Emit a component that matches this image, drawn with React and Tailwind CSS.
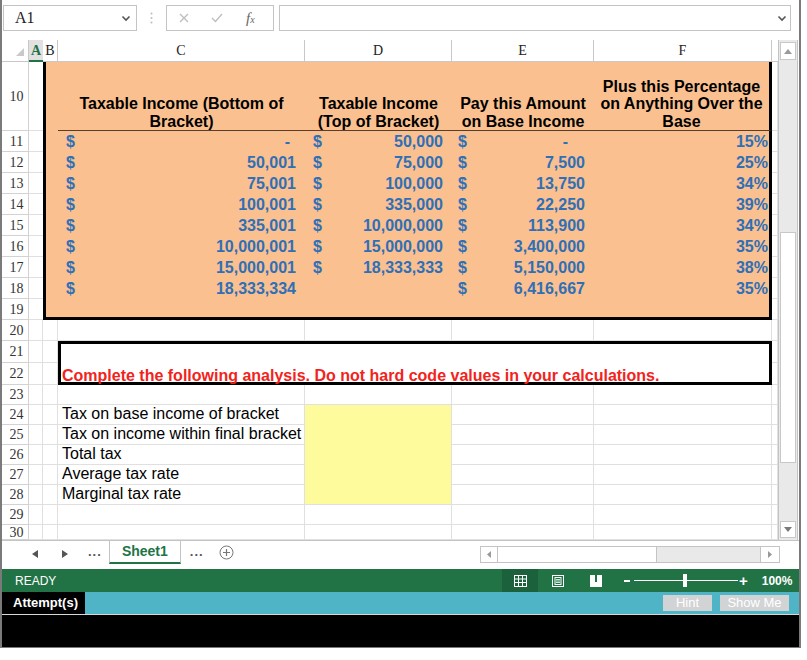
import React from 'react';

const ORANGE = 'bg-[#fac090]';
const BLUE = 'text-[#2f6fb6]';

const Chevron = ({ className = '' }) => (
  <svg width="10" height="7" viewBox="0 0 10 7" className={className}>
    <polyline points="1.5,1.5 5,5 8.5,1.5" fill="none" stroke="#555" strokeWidth="1.6" />
  </svg>
);

const Head = ({ n }) => (
  <div className="w-[27px] shrink-0 flex items-center justify-center border-r border-b border-[#d2d2d2] pl-[3px] font-['Liberation_Serif',serif] text-[14px] text-[#333]">
    {n}
  </div>
);

function Plain({ n, h, label, yellow, lastYellow }) {
  return (
    <div className={`flex ${h}`}>
      <Head n={n} />
      <div className="w-[14px] shrink-0 border-r border-b border-[#e0e0e0]" />
      <div className="w-[15px] shrink-0 border-r border-b border-[#e0e0e0]" />
      <div className="w-[247px] shrink-0 flex items-center pl-1 pb-[2px] border-r border-b border-[#e0e0e0] text-[16px] text-black whitespace-nowrap">
        {label}
      </div>
      <div
        className={`w-[147px] shrink-0 border-r border-[#e0e0e0] ${yellow ? 'bg-[#fefb9d]' : ''} ${
          yellow && !lastYellow ? '' : 'border-b'
        }`}
      />
      <div className="w-[142px] shrink-0 border-r border-b border-[#e0e0e0]" />
      <div className="w-[178px] shrink-0 border-r border-b border-[#e0e0e0]" />
      <div className="w-[6px] shrink-0 border-r border-b border-[#e0e0e0]" />
    </div>
  );
}

function Orange({ n, h, header, last, c, d, e, f }) {
  const bb = last
    ? 'border-b-[3px] border-b-black'
    : header
    ? 'border-b border-b-[#5a3e2b]'
    : '';
  return (
    <div className={`flex ${h}`}>
      <Head n={n} />
      <div className="w-[14px] shrink-0 border-b border-[#e0e0e0]" />
      <div className={`w-[15px] shrink-0 ${ORANGE} border-l-[3px] border-l-black ${last ? 'border-b-[3px] border-b-black' : ''}`} />
      <div className={`w-[247px] shrink-0 ${ORANGE} ${bb}`}>{c}</div>
      <div className={`w-[147px] shrink-0 ${ORANGE} ${bb}`}>{d}</div>
      <div className={`w-[142px] shrink-0 ${ORANGE} ${bb}`}>{e}</div>
      <div className={`w-[178px] shrink-0 ${ORANGE} border-r-[3px] border-r-black ${bb}`}>{f}</div>
      <div className="w-[6px] shrink-0 border-r border-b border-[#e0e0e0]" />
    </div>
  );
}

function BoxRow({ n, h, top, children }) {
  const edge = top ? 'border-t-[3px]' : 'border-b-[3px]';
  return (
    <div className={`flex ${h}`}>
      <Head n={n} />
      <div className="w-[14px] shrink-0 border-r border-b border-[#e0e0e0]" />
      <div className="w-[15px] shrink-0 border-r border-b border-[#e0e0e0]" />
      <div className={`w-[247px] shrink-0 border-l-[3px] border-black ${edge} flex items-end pl-[1px]`}>{children}</div>
      <div className={`w-[147px] shrink-0 border-black ${edge}`} />
      <div className={`w-[142px] shrink-0 border-black ${edge}`} />
      <div className={`w-[178px] shrink-0 border-r-[3px] border-black ${edge}`} />
      <div className="w-[6px] shrink-0 border-r border-b border-[#e0e0e0]" />
    </div>
  );
}

const HeaderText = ({ children }) => (
  <div className="h-full flex items-end justify-center text-center font-bold text-[16px] leading-[17.5px] text-black">
    <div>{children}</div>
  </div>
);

const data = [
  ['-', '50,000', '-', '15%'],
  ['50,001', '75,000', '7,500', '25%'],
  ['75,001', '100,000', '13,750', '34%'],
  ['100,001', '335,000', '22,250', '39%'],
  ['335,001', '10,000,000', '113,900', '34%'],
  ['10,000,001', '15,000,000', '3,400,000', '35%'],
  ['15,000,001', '18,333,333', '5,150,000', '38%'],
  ['18,333,334', null, '6,416,667', '35%'],
];

function Money({ v, pl, dashPr }) {
  if (v === null) return null;
  return (
    <div className={`h-full flex items-center justify-between ${pl} pr-[9px] font-bold text-[16px] ${BLUE}`}>
      <span>$</span>
      <span className={v === '-' ? dashPr : ''}>{v}</span>
    </div>
  );
}

export default function App() {
  return (
    <div className="w-[807px] h-[660px] bg-white font-['Liberation_Sans',Arial,sans-serif] overflow-hidden">
      <div className="w-[801px] border-l-2 border-r-2 border-b border-[#7a7a7a] flex flex-col">
        {/* formula bar */}
        <div className="h-[40px] flex items-start pt-[5px]">
          <div className="ml-px w-[134px] h-[26px] border border-[#c4c4c4] flex items-center pl-[11px] pr-[5px]">
            <span className="font-['Liberation_Serif',serif] text-[16px] text-[#222]">A1</span>
            <Chevron className="ml-auto" />
          </div>
          <div className="w-[29px] h-[26px] flex items-center justify-center">
            <svg width="3" height="12" viewBox="0 0 3 12">
              <circle cx="1.5" cy="1.5" r="1" fill="#bbb" />
              <circle cx="1.5" cy="6" r="1" fill="#bbb" />
              <circle cx="1.5" cy="10.5" r="1" fill="#bbb" />
            </svg>
          </div>
          <div className="w-[108px] h-[26px] border border-[#c4c4c4] flex items-center">
            <svg width="10" height="10" viewBox="0 0 10 10" className="ml-[12px]">
              <path d="M1 1 L9 9 M9 1 L1 9" stroke="#bdbdbd" strokeWidth="1.3" />
            </svg>
            <svg width="12" height="10" viewBox="0 0 12 10" className="ml-[22px]">
              <polyline points="1,5 4.5,8.5 11,1" fill="none" stroke="#bdbdbd" strokeWidth="1.3" />
            </svg>
            <span className="ml-[23px] font-['Liberation_Serif',serif] italic text-[15px] text-[#666]">
              f<span className="text-[10px]">x</span>
            </span>
          </div>
          <div className="ml-[5px] w-[512px] h-[26px] border border-[#c4c4c4] flex items-center justify-end pr-[3px]">
            <Chevron />
          </div>
        </div>

        {/* grid + vertical scrollbar */}
        <div className="flex h-[500px]">
          <div className="w-[776px] shrink-0 flex flex-col">
            <div className="flex h-[22px] font-['Liberation_Serif',serif] text-[14px] text-[#222]">
              <div className="w-[27px] shrink-0 border-r border-b border-[#c8c8c8] flex items-end justify-end pr-[4px] pb-[5px]">
                <svg width="8" height="8" viewBox="0 0 8 8">
                  <polygon points="8,0 8,8 0,8" fill="#c9c9c9" />
                </svg>
              </div>
              <div className="w-[14px] shrink-0 bg-[#e1e1e1] border-b-2 border-[#217346] flex items-center justify-center font-bold text-[#217346]">
                A
              </div>
              <div className="w-[15px] shrink-0 border-r border-b border-[#c8c8c8] flex items-center justify-center">B</div>
              <div className="w-[247px] shrink-0 border-r border-b border-[#c8c8c8] flex items-center justify-center">C</div>
              <div className="w-[147px] shrink-0 border-r border-b border-[#c8c8c8] flex items-center justify-center">D</div>
              <div className="w-[142px] shrink-0 border-r border-b border-[#c8c8c8] flex items-center justify-center">E</div>
              <div className="w-[178px] shrink-0 border-r border-b border-[#c8c8c8] flex items-center justify-center">F</div>
              <div className="w-[6px] shrink-0 border-b border-[#c8c8c8]" />
            </div>

            <Orange
              n={10}
              h="h-[69px]"
              header
              c={<HeaderText>Taxable Income (Bottom of<br />Bracket)</HeaderText>}
              d={<HeaderText>Taxable Income<br />(Top of Bracket)</HeaderText>}
              e={<HeaderText>Pay this Amount<br />on Base Income</HeaderText>}
              f={<HeaderText>Plus this Percentage<br />on Anything Over the<br />Base</HeaderText>}
            />
            {data.map((r, i) => (
              <Orange
                key={i}
                n={11 + i}
                h="h-[21px]"
                c={<Money v={r[0]} pl="pl-2" dashPr="pr-[6px]" />}
                d={<Money v={r[1]} pl="pl-2" dashPr="pr-[6px]" />}
                e={<Money v={r[2]} pl="pl-[6px]" dashPr="pr-[17px]" />}
                f={
                  <div className={`h-full flex items-center justify-end pr-px font-bold text-[16px] ${BLUE}`}>
                    {r[3]}
                  </div>
                }
              />
            ))}
            <Orange n={19} h="h-[21px]" last />
            <Plain n={20} h="h-[21px]" />
            <BoxRow n={21} h="h-[22px]" top />
            <BoxRow n={22} h="h-[22px]">
              <span className="relative z-10 whitespace-nowrap font-bold text-[16px] leading-[12px] text-[#f2231c]">
                Complete the following analysis. Do not hard code values in your calculations.
              </span>
            </BoxRow>
            <Plain n={23} h="h-[20px]" />
            <Plain n={24} h="h-[20px]" label="Tax on base income of bracket" yellow />
            <Plain n={25} h="h-[20px]" label="Tax on income within final bracket" yellow />
            <Plain n={26} h="h-[20px]" label="Total tax" yellow />
            <Plain n={27} h="h-[20px]" label="Average tax rate" yellow />
            <Plain n={28} h="h-[20px]" label="Marginal tax rate" yellow lastYellow />
            <Plain n={29} h="h-[20px]" />
            <Plain n={30} h="h-[15px]" />
          </div>

          <div className="w-[20px] shrink-0 bg-[#e9e9e9] border-x border-[#c4c4c4] flex flex-col">
            <div className="mt-[2px] mx-px h-[18px] bg-white border border-[#c8c8c8] flex items-center justify-center">
              <svg width="8" height="5" viewBox="0 0 8 5">
                <polygon points="4,0 8,5 0,5" fill="#9a9a9a" />
              </svg>
            </div>
            <div className="mt-[172px] mx-px h-[231px] bg-white border border-[#c8c8c8]" />
            <div className="mt-auto mb-[2px] mx-px h-[17px] bg-white border border-[#c8c8c8] flex items-center justify-center">
              <svg width="8" height="5" viewBox="0 0 8 5">
                <polygon points="0,0 8,0 4,5" fill="#7a7a7a" />
              </svg>
            </div>
          </div>
        </div>

        {/* sheet tabs */}
        <div className="h-[29px] border-t border-[#c4c4c4] flex items-start">
          <svg width="6" height="8" viewBox="0 0 6 8" className="ml-[30px] mt-[9px]">
            <polygon points="6,0 6,8 0,4" fill="#555" />
          </svg>
          <svg width="6" height="8" viewBox="0 0 6 8" className="ml-[24px] mt-[9px]">
            <polygon points="0,0 0,8 6,4" fill="#555" />
          </svg>
          <span className="ml-[20px] mt-[4px] text-[13px] font-bold text-[#555] leading-none tracking-[1px]">...</span>
          <div className="ml-[7px] w-[72px] h-[23px] border-x border-[#c4c4c4] border-b-2 border-b-[#217346] flex items-center justify-center text-[14px] font-bold text-[#217346]">
            Sheet1
          </div>
          <span className="ml-[9px] mt-[4px] text-[13px] font-bold text-[#555] leading-none tracking-[1px]">...</span>
          <svg width="15" height="15" viewBox="0 0 15 15" className="ml-[15px] mt-[4px]">
            <circle cx="7.5" cy="7.5" r="6.5" fill="none" stroke="#777" strokeWidth="1" />
            <path d="M7.5 4 V11 M4 7.5 H11" stroke="#777" strokeWidth="1.2" />
          </svg>
          <div className="ml-auto mr-[19px] mt-[5px] w-[300px] h-[17px] border border-[#c4c4c4] bg-[#e9e9e9] flex">
            <div className="w-[17px] bg-white border-r border-[#c4c4c4] flex items-center justify-center">
              <svg width="4" height="7" viewBox="0 0 4 7">
                <polygon points="4,0 4,7 0,3.5" fill="#999" />
              </svg>
            </div>
            <div className="w-[159px] bg-white border-r border-[#c4c4c4]" />
            <div className="flex-1" />
            <div className="w-[19px] bg-white border-l border-[#c4c4c4] flex items-center justify-center">
              <svg width="4" height="7" viewBox="0 0 4 7">
                <polygon points="0,0 0,7 4,3.5" fill="#999" />
              </svg>
            </div>
          </div>
        </div>

        {/* status bar */}
        <div className="h-[23px] bg-[#217346] flex items-center text-white">
          <span className="ml-[13px] text-[12px]">READY</span>
          <div className="ml-auto w-[297px] h-full flex items-center">
            <div className="w-[36px] h-full bg-[#1b613b] flex items-center justify-center">
              <svg width="13" height="12" viewBox="0 0 13 12">
                <rect x="0.5" y="0.5" width="12" height="11" fill="none" stroke="#fff" />
                <path d="M4.5 0.5 V11.5 M8.5 0.5 V11.5 M0.5 4 H12.5 M0.5 7.5 H12.5" stroke="#fff" />
              </svg>
            </div>
            <svg width="12" height="12" viewBox="0 0 12 12" className="ml-[14px]">
              <rect x="0.5" y="0.5" width="11" height="11" fill="none" stroke="#fff" />
              <rect x="3" y="2.5" width="6" height="7" fill="none" stroke="#fff" />
              <path d="M4 4.5 H8 M4 6 H8 M4 7.5 H8" stroke="#fff" strokeWidth="0.8" />
            </svg>
            <svg width="12" height="12" viewBox="0 0 12 12" className="ml-[26px]">
              <rect x="0" y="0" width="12" height="12" fill="#fff" />
              <rect x="5" y="0" width="2" height="7" fill="#217346" />
            </svg>
            <div className="ml-[22px] w-[6px] h-[2px] bg-white" />
            <div className="ml-[4px] w-[104px] h-px bg-white relative">
              <div className="absolute left-[49px] -top-[6px] w-[4px] h-[13px] bg-white" />
            </div>
            <span className="ml-[1px] text-[15px] font-bold leading-none">+</span>
            <span className="ml-[14px] text-[12px] font-bold">100%</span>
          </div>
        </div>

        {/* attempts bar */}
        <div className="h-[22px] bg-[#4fb4c5] flex items-center">
          <div className="w-[83px] h-full bg-black flex items-center pl-[11px] text-[13px] font-bold text-white">
            Attempt(s)
          </div>
          <div className="ml-auto w-[49px] h-[16px] bg-[#d2d3d4] flex items-center justify-center text-[13px] text-white">
            Hint
          </div>
          <div className="ml-[8px] mr-[10px] w-[69px] h-[16px] bg-[#d2d3d4] flex items-center justify-center text-[13px] text-white">
            Show Me
          </div>
        </div>

        <div className="h-[33px] bg-black border-t border-[#d8d8d8]" />
      </div>
    </div>
  );
}
